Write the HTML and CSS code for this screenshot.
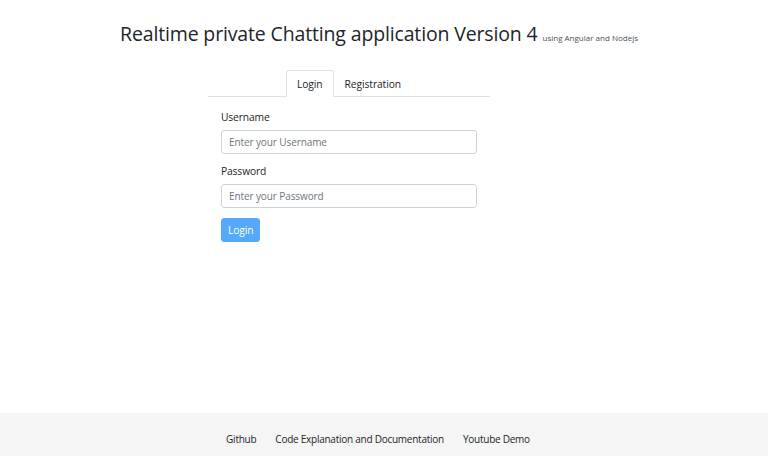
FILE: index.html
```html
<!DOCTYPE html>
<html>
<head>
<meta charset="utf-8">
<link rel="stylesheet" href="styles.css">
</head>
<body>
<div class="page">
  <h3 class="title">Realtime private Chatting application Version 4 <small class="sub">using Angular and Nodejs</small></h3>
  <div class="panel">
    <ul class="tabs">
      <li class="tab active">Login</li>
      <li class="tab">Registration</li>
    </ul>
    <form class="form">
      <div class="group">
        <label class="label">Username</label>
        <input class="input" type="text" placeholder="Enter your Username">
      </div>
      <div class="group">
        <label class="label">Password</label>
        <input class="input" type="password" placeholder="Enter your Password">
      </div>
      <button class="btn" type="button">Login</button>
    </form>
  </div>
</div>
<footer class="footer">
  <a class="link">Github</a>
  <a class="link">Code Explanation and Documentation</a>
  <a class="link">Youtube Demo</a>
</footer>
</body>
</html>
```

FILE: styles.css
```css
html, body { margin: 0; padding: 0; height: 100%; }
body {
  font-family: "Open Sans", "Noto Sans", sans-serif;
  color: #212529;
  background: #fff;
  display: flex;
  flex-direction: column;
  height: 456px;
  overflow: hidden;
}
.page { flex: 1; }
.title {
  margin: 20px 0 0 0;
  padding-right: 10px;
  text-align: center;
  font-weight: 400;
  font-size: 19.5px;
  letter-spacing: -0.15px;
  line-height: 28px;
  color: #212529;
}
.sub {
  font-size: 8px;
  letter-spacing: 0;
  color: #495057;
}
.panel {
  width: 282px;
  margin: 18px 0 0 208px;
}
.tabs {
  list-style: none;
  margin: 0;
  padding: 0;
  display: flex;
  justify-content: center;
  border-bottom: 1px solid #dee2e6;
  height: 26px;
}
.tab {
  font-size: 10.3px;
  letter-spacing: -0.1px;
  line-height: 26px;
  padding: 0 10px;
  border: 1px solid transparent;
  border-bottom: none;
  border-radius: 3px 3px 0 0;
  margin-bottom: -1px;
  color: #212529;
}
.tab.active {
  border-color: #dee2e6;
  background: #fff;
  height: 26px;
}
.form {
  padding: 13px 13px 0 13px;
  display: flex;
  flex-direction: column;
  align-items: flex-start;
}
.group {
  width: 100%;
  margin-bottom: 10px;
}
.label {
  display: block;
  font-size: 10.3px;
  letter-spacing: -0.15px;
  line-height: 14px;
  margin-bottom: 5px;
}
.input {
  box-sizing: border-box;
  width: 100%;
  height: 24px;
  border: 1px solid #ced4da;
  border-radius: 3px;
  padding: 0 7px;
  font-family: inherit;
  font-size: 10px;
  letter-spacing: -0.1px;
  color: #495057;
}
.input::placeholder { color: #6c757d; }
.btn {
  box-sizing: border-box;
  height: 24px;
  padding: 0 6px;
  border: 1px solid #55a9f8;
  background: #55a9f8;
  color: #fff;
  border-radius: 3px;
  font-family: inherit;
  font-size: 10.3px;
  letter-spacing: -0.15px;
}
.footer {
  height: 43px;
  background: #f5f5f5;
  display: flex;
  justify-content: center;
  align-items: center;
  gap: 19px;
  padding-top: 8px;
  padding-right: 12px;
  box-sizing: border-box;
}
.link {
  font-size: 10px;
  letter-spacing: -0.25px;
  color: #212529;
}
```
